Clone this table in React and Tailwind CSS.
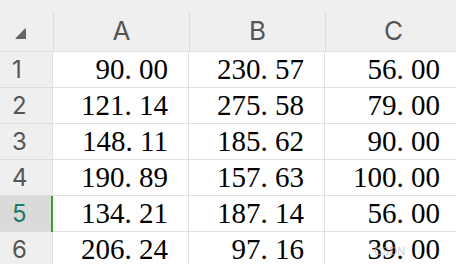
const rows = [
  ["90.00", "230.57", "56.00"],
  ["121.14", "275.58", "79.00"],
  ["148.11", "185.62", "90.00"],
  ["190.89", "157.63", "100.00"],
  ["134.21", "187.14", "56.00"],
  ["206.24", "97.16", "39.00"],
];

const Num = ({ value }) => {
  const [whole, frac] = value.split(".");
  return (
    <span>
      {whole}
      <span className="inline-block w-[0.5em] text-left">.</span>
      {frac}
    </span>
  );
};

export default function App() {
  return (
    <div className="relative w-[456px] h-[264px] overflow-hidden bg-white">
      <div className="grid grid-cols-[53px_136px_136px_136px] w-max">
        {/* header */}
        <div className="h-[52px] bg-[#efefef] border-b border-[#dedede] flex items-end">
          <div className="h-[38px] w-full pl-[15px] pt-[15px]">
            <svg width="11" height="11" viewBox="0 0 11 11">
              <path d="M10 0.5 Q11 0 11 1.5 L11 11 L0.5 11 Q0 11 0.8 10 Z" fill="#666" />
            </svg>
          </div>
        </div>
        {["A", "B", "C"].map((c) => (
          <div key={c} className="h-[52px] bg-[#efefef] border-b border-[#dedede] flex items-end">
            <div
              className="h-[39px] w-full border-l border-[#dadada] flex items-center justify-center text-[26px] text-[#555] pb-[3px]"
              style={{ fontFamily: "Inter, 'Noto Sans', sans-serif" }}
            >
              {c}
            </div>
          </div>
        ))}

        {rows.map((r, i) => {
          const active = i === 4;
          return [
            <div
              key={`h${i}`}
              className={`relative h-[36px] border-b border-r border-[#dedede] flex items-center pl-[12px] text-[24px] ${
                active ? "bg-[#dadada] text-[#1e7b68]" : "bg-[#efefef] text-[#555]"
              }`}
              style={{ fontFamily: "Inter, 'Noto Sans', sans-serif" }}
            >
              {i + 1}
              {active && <div className="absolute right-[-1px] top-0 h-[36px] w-[2px] bg-[#3a9a2a]" />}
            </div>,
            ...r.map((v, j) => (
              <div
                key={`c${i}${j}`}
                className="h-[36px] border-b border-r border-[#e0e0e0] flex items-center justify-end pr-[20px] text-[29px] text-black leading-none"
                style={{ fontFamily: "'Liberation Serif', serif" }}
              >
                <Num value={v} />
              </div>
            )),
          ];
        })}
      </div>
      <div
        className="absolute left-[374px] top-[243px] text-[11px] text-[#b4b4b4]/70"
        style={{ fontFamily: "'Liberation Sans', sans-serif" }}
      >
        CSDN @yuxiaoID
      </div>
    </div>
  );
}
